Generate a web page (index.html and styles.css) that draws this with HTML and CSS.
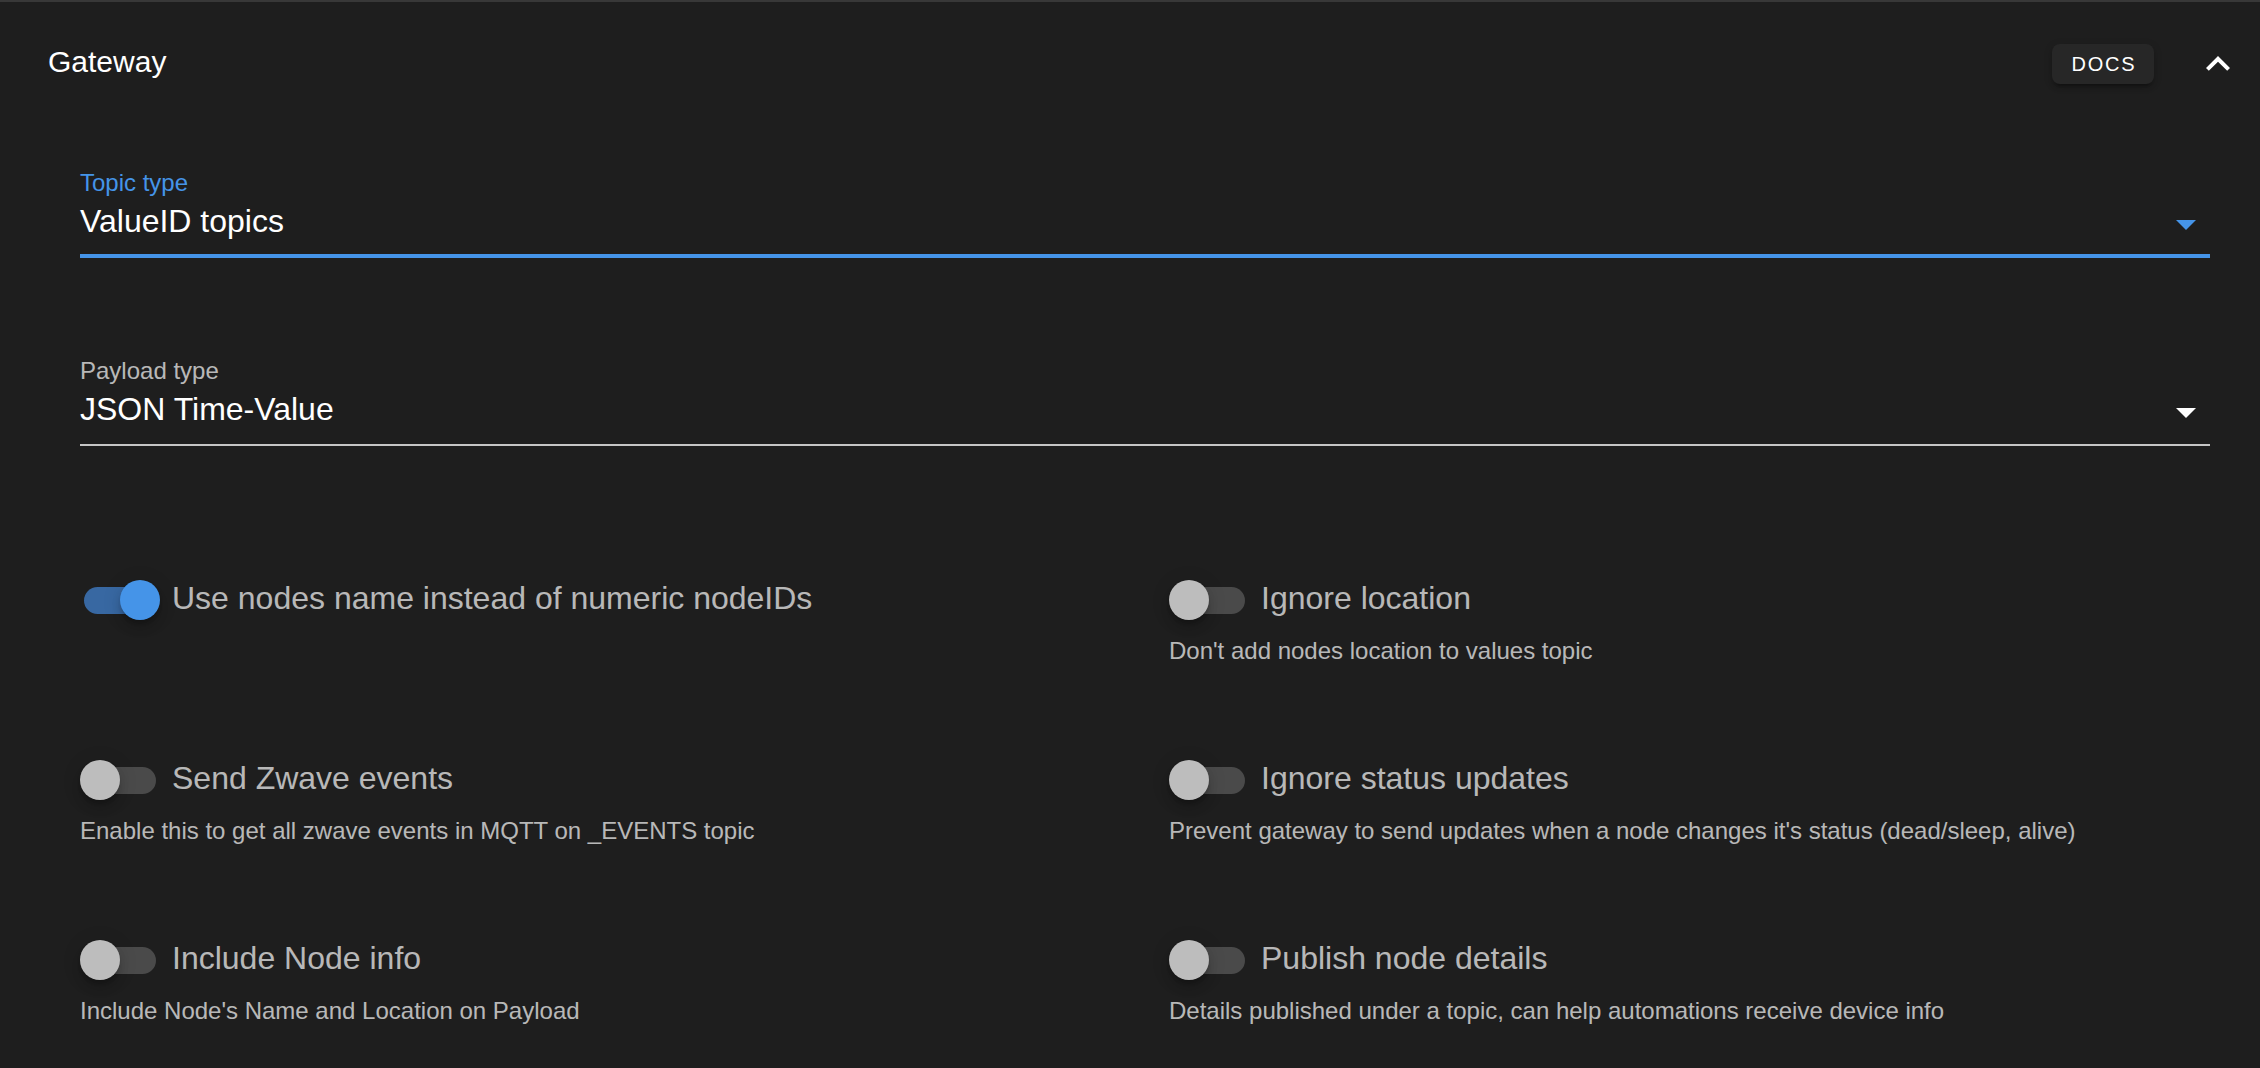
FILE: index.html
```html
<!DOCTYPE html>
<html lang="en">
<head>
<meta charset="utf-8">
<title>Gateway</title>
<link rel="stylesheet" href="styles.css">
</head>
<body>
<section class="panel">
  <header class="panel-header">
    <span class="panel-title">Gateway</span>
    <div class="header-actions">
      <button class="docs-btn" type="button">DOCS</button>
      <svg class="chevron" viewBox="0 0 24 24"><path d="M7.41,15.41L12,10.83L16.59,15.41L18,14L12,8L6,14L7.41,15.41Z"/></svg>
    </div>
  </header>
  <div class="panel-content">
    <div class="field focused">
      <div class="field-label">Topic type</div>
      <div class="field-row">
        <span class="field-value">ValueID topics</span>
        <svg class="field-arrow" viewBox="0 0 24 24"><path d="M7,10L12,15L17,10H7Z"/></svg>
      </div>
      <div class="field-line"></div>
    </div>
    <div class="field">
      <div class="field-label">Payload type</div>
      <div class="field-row">
        <span class="field-value">JSON Time-Value</span>
        <svg class="field-arrow" viewBox="0 0 24 24"><path d="M7,10L12,15L17,10H7Z"/></svg>
      </div>
      <div class="field-line"></div>
    </div>

    <div class="switch-grid">
      <div class="switch-item">
        <div class="switch-head">
          <span class="switch on"><span class="switch-track"></span><span class="switch-thumb"></span></span>
          <span class="switch-label">Use nodes name instead of numeric nodeIDs</span>
        </div>
      </div>
      <div class="switch-item">
        <div class="switch-head">
          <span class="switch"><span class="switch-track"></span><span class="switch-thumb"></span></span>
          <span class="switch-label">Ignore location</span>
        </div>
        <div class="switch-desc">Don't add nodes location to values topic</div>
      </div>
      <div class="switch-item">
        <div class="switch-head">
          <span class="switch"><span class="switch-track"></span><span class="switch-thumb"></span></span>
          <span class="switch-label">Send Zwave events</span>
        </div>
        <div class="switch-desc">Enable this to get all zwave events in MQTT on _EVENTS topic</div>
      </div>
      <div class="switch-item">
        <div class="switch-head">
          <span class="switch"><span class="switch-track"></span><span class="switch-thumb"></span></span>
          <span class="switch-label">Ignore status updates</span>
        </div>
        <div class="switch-desc">Prevent gateway to send updates when a node changes it's status (dead/sleep, alive)</div>
      </div>
      <div class="switch-item">
        <div class="switch-head">
          <span class="switch"><span class="switch-track"></span><span class="switch-thumb"></span></span>
          <span class="switch-label">Include Node info</span>
        </div>
        <div class="switch-desc">Include Node's Name and Location on Payload</div>
      </div>
      <div class="switch-item">
        <div class="switch-head">
          <span class="switch"><span class="switch-track"></span><span class="switch-thumb"></span></span>
          <span class="switch-label">Publish node details</span>
        </div>
        <div class="switch-desc">Details published under a topic, can help automations receive device info</div>
      </div>
    </div>
  </div>
</section>
</body>
</html>
```

FILE: styles.css
```css
html {
  background: #1e1e1e;
}

body {
  margin: 0;
  height: 1066px;
  overflow: hidden;
  background: #1e1e1e;
  border-top: 2px solid #383838;
  font-family: "Liberation Sans", Arial, sans-serif;
  color: #fff;
}

.panel-header {
  display: flex;
  align-items: center;
  justify-content: space-between;
  height: 124px;
  padding: 0 18px 0 48px;
}

.panel-title {
  font-size: 30px;
  line-height: 36px;
  color: #fff;
  margin-bottom: 4px;
}

.header-actions {
  display: flex;
  align-items: center;
  gap: 40px;
}

.docs-btn {
  width: 102px;
  height: 40px;
  padding: 0;
  border: 0;
  border-radius: 8px;
  background: #272727;
  color: #fff;
  font-family: "Liberation Sans", Arial, sans-serif;
  font-size: 20px;
  letter-spacing: 1.8px;
  text-indent: 1.8px;
  box-shadow: 0 6px 2px -4px rgba(0, 0, 0, 0.2), 0 4px 4px 0 rgba(0, 0, 0, 0.14), 0 2px 10px 0 rgba(0, 0, 0, 0.12);
}

.chevron {
  display: block;
  width: 48px;
  height: 48px;
  fill: #fff;
}

.panel-content {
  padding: 42px 50px 0 80px;
}

.field + .field {
  margin-top: 98px;
}

.field-label {
  font-size: 24px;
  line-height: 30px;
  color: rgba(255, 255, 255, 0.7);
}

.field.focused .field-label {
  color: #4594e8;
}

.field-row {
  display: flex;
  align-items: flex-start;
  justify-content: space-between;
  height: 58px;
}

.field-value {
  font-size: 32px;
  line-height: 46px;
  color: #fff;
}

.field-arrow {
  display: block;
  width: 48px;
  height: 48px;
  margin-top: 2px;
  fill: #fff;
}

.field.focused .field-arrow {
  fill: #4594e8;
}

.field-line {
  height: 2px;
  background: rgba(255, 255, 255, 0.75);
}

.field.focused .field-line {
  height: 4px;
  margin-top: -2px;
  background: #4594e8;
}

.switch-grid {
  display: grid;
  grid-template-columns: 1fr 1fr;
  column-gap: 48px;
  row-gap: 94px;
  margin-top: 134px;
}

.switch-head {
  display: flex;
  align-items: flex-start;
}

.switch {
  position: relative;
  flex: none;
  width: 76px;
  height: 40px;
  margin-right: 16px;
}

.switch-track {
  position: absolute;
  left: 4px;
  top: 7px;
  width: 72px;
  height: 27px;
  border-radius: 14px;
  background: #4a4a4a;
}

.switch-thumb {
  position: absolute;
  left: 0;
  top: 0;
  width: 40px;
  height: 40px;
  border-radius: 50%;
  background: #bdbdbd;
  box-shadow: 0 4px 4px -2px rgba(0, 0, 0, 0.2), 0 8px 10px 0 rgba(0, 0, 0, 0.14), 0 2px 20px 0 rgba(0, 0, 0, 0.12);
}

.switch.on .switch-track {
  background: #3868a2;
}

.switch.on .switch-thumb {
  left: 40px;
  background: #4594e8;
}

.switch-label {
  font-size: 32px;
  line-height: 36px;
  color: rgba(255, 255, 255, 0.7);
}

.switch-desc {
  margin-top: 16px;
  font-size: 24px;
  line-height: 30px;
  color: rgba(255, 255, 255, 0.7);
}
```
